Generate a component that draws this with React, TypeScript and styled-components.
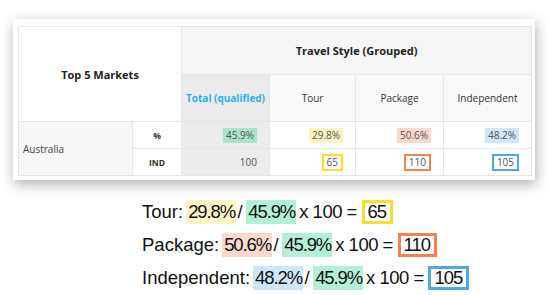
import React from "react";
import styled, { createGlobalStyle } from "styled-components";

const GlobalStyle = createGlobalStyle`
  html, body {
    margin: 0;
    padding: 0;
    background: #ffffff;
  }
`;

const Page = styled.div`
  width: 549px;
  height: 295px;
  overflow: hidden;
  padding-top: 19px;
  box-sizing: border-box;
`;

const Card = styled.div`
  margin-left: 13px;
  width: 522px;
  box-sizing: border-box;
  padding: 7px 4px 4px 5px;
  background: #ffffff;
  box-shadow: 1px 4px 12px rgba(0, 0, 0, 0.32);
`;

const Table = styled.table`
  border-collapse: collapse;
  table-layout: fixed;
  width: 513px;
  font-family: "Open Sans", "Liberation Sans", sans-serif;
  font-size: 10px;
  color: #555555;
`;

const HeadCell = styled.th<{ $bg?: string; $h?: number }>`
  border: 1px solid #e6e6e6;
  background: ${(p) => p.$bg || "#ffffff"};
  height: ${(p) => p.$h || 46}px;
  padding: 0;
  text-align: center;
  vertical-align: middle;
  font-size: 11px;
  font-weight: 700;
  color: #222222;
`;

const ColHead = styled.th<{ $bg?: string; $accent?: boolean }>`
  border: 1px solid #e6e6e6;
  background: ${(p) => p.$bg || "#f9f9f9"};
  height: 46px;
  padding: 0;
  text-align: center;
  vertical-align: middle;
  font-size: 10px;
  font-weight: ${(p) => (p.$accent ? 700 : 400)};
  color: ${(p) => (p.$accent ? "#2bb0f0" : "#333333")};
`;

const MarketCell = styled.td`
  border: 1px solid #e6e6e6;
  background: #f7f7f7;
  padding: 0 0 0 4px;
  font-size: 10px;
  color: #444444;
  vertical-align: middle;
`;

const MetricCell = styled.td`
  border: 1px solid #e6e6e6;
  background: #ffffff;
  height: 26px;
  padding: 0;
  text-align: center;
  vertical-align: middle;
  font-size: 8.5px;
  font-weight: 700;
  color: #333333;
`;

const ValueCell = styled.td<{ $bg?: string }>`
  border: 1px solid #e6e6e6;
  background: ${(p) => p.$bg || "#ffffff"};
  height: 26px;
  padding: 0 12px 0 0;
  text-align: right;
  vertical-align: middle;
`;

const Mark = styled.span<{ $bg: string }>`
  display: inline-block;
  background: ${(p) => p.$bg};
  padding: 0 3px;
  line-height: 15px;
`;

const Boxed = styled.span<{ $c: string }>`
  display: inline-block;
  border: 2px solid ${(p) => p.$c};
  padding: 0 3px;
  line-height: 13px;
`;

const Formulas = styled.div`
  margin: 15px 0 0 142px;
  font-family: "Liberation Sans", Arial, sans-serif;
  font-size: 18.5px;
  color: #111111;
`;

const Line = styled.div`
  display: flex;
  align-items: center;
  height: 33px;
  white-space: pre;
`;

const Label = styled.span`
  margin-right: 3px;
`;

const Hi = styled.span<{ $bg: string }>`
  background: ${(p) => p.$bg};
  line-height: 24px;
  padding: 0 1px 0 2px;
  letter-spacing: -1.1px;
`;

const Slash = styled.span`
  padding: 0 3.5px 0 1.5px;
`;

const Op = styled.span`
  letter-spacing: -0.5px;
  padding-left: 3px;
`;

const Box = styled.span<{ $c: string }>`
  border: 3px solid ${(p) => p.$c};
  line-height: 18px;
  padding: 0 4px 0 3px;
  letter-spacing: -1px;
`;

const TABLE_HL = {
  green: "#a9e3ca",
  yellow: "#fdf3c0",
  pink: "#fbd8cb",
  blue: "#cfe7f7",
};

const TEXT_HL = {
  green: "#b2efd6",
  yellow: "#fff5c8",
  pink: "#fdd9cd",
  blue: "#cde7f7",
};

const BOX = {
  yellow: "#fddc2c",
  orange: "#f2834f",
  blue: "#4ea9e2",
};

const columns = [
  { name: "Tour", pct: "29.8%", ind: "65", hl: "yellow", box: "yellow" },
  { name: "Package", pct: "50.6%", ind: "110", hl: "pink", box: "orange" },
  { name: "Independent", pct: "48.2%", ind: "105", hl: "blue", box: "blue" },
] as const;

const App = () => {
  return (
    <>
      <GlobalStyle />
      <Page>
        <Card>
          <Table>
            <colgroup>
              <col style={{ width: 114 }} />
              <col style={{ width: 49 }} />
              <col style={{ width: 88 }} />
              <col style={{ width: 86 }} />
              <col style={{ width: 88 }} />
              <col style={{ width: 88 }} />
            </colgroup>
            <thead>
              <tr>
                <HeadCell colSpan={2} rowSpan={2}>
                  Top 5 Markets
                </HeadCell>
                <HeadCell colSpan={4} $bg="#f5f5f5" $h={47}>
                  Travel Style (Grouped)
                </HeadCell>
              </tr>
              <tr>
                <ColHead $bg="#ebebeb" $accent>
                  Total (qualified)
                </ColHead>
                {columns.map((c) => (
                  <ColHead key={c.name}>{c.name}</ColHead>
                ))}
              </tr>
            </thead>
            <tbody>
              <tr>
                <MarketCell rowSpan={2}>Australia</MarketCell>
                <MetricCell>%</MetricCell>
                <ValueCell $bg="#ececec">
                  <Mark $bg={TABLE_HL.green}>45.9%</Mark>
                </ValueCell>
                {columns.map((c) => (
                  <ValueCell key={c.name}>
                    <Mark $bg={TABLE_HL[c.hl]}>{c.pct}</Mark>
                  </ValueCell>
                ))}
              </tr>
              <tr>
                <MetricCell>IND</MetricCell>
                <ValueCell $bg="#ececec">100</ValueCell>
                {columns.map((c) => (
                  <ValueCell key={c.name}>
                    <Boxed $c={BOX[c.box]}>{c.ind}</Boxed>
                  </ValueCell>
                ))}
              </tr>
            </tbody>
          </Table>
        </Card>

        <Formulas>
          {columns.map((c) => (
            <Line key={c.name}>
              <Label>{c.name}:</Label>
              <Hi $bg={TEXT_HL[c.hl]}>{c.pct}</Hi>
              <Slash>/</Slash>
              <Hi $bg={TEXT_HL.green}>45.9%</Hi>
              <Op>x 100 = </Op>
              <Box $c={BOX[c.box]}>{c.ind}</Box>
            </Line>
          ))}
        </Formulas>
      </Page>
    </>
  );
};

export default App;
